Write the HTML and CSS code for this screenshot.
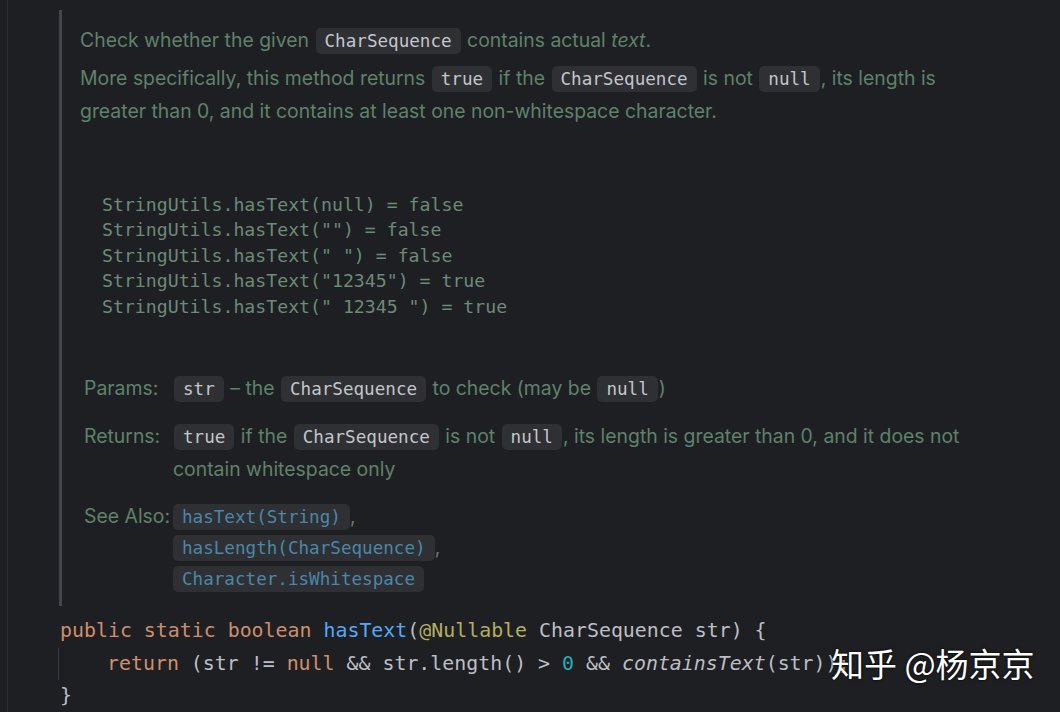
FILE: index.html
```html
<!DOCTYPE html>
<html lang="en">
<head>
<meta charset="utf-8">
<title>hasText</title>
<link rel="stylesheet" href="styles.css">
</head>
<body>
<div class="editor">
  <div class="doc">
    <p class="p1">Check whether the given <code class="chip">CharSequence</code> contains actual <i>text</i>.</p>
    <p class="p2">More specifically, this method returns <code class="chip">true</code> if the <code class="chip">CharSequence</code> is not <code class="chip">null</code>, its length is<br>greater than 0, and it contains at least one non-whitespace character.</p>
    <pre class="example">StringUtils.hasText(null) = false
StringUtils.hasText("") = false
StringUtils.hasText(" ") = false
StringUtils.hasText("12345") = true
StringUtils.hasText(" 12345 ") = true</pre>
    <div class="tags">
      <div class="label">Params:</div>
      <div class="value"><code class="chip">str</code> – the <code class="chip">CharSequence</code> to check (may be <code class="chip">null</code>)</div>
      <div class="label">Returns:</div>
      <div class="value"><code class="chip">true</code> if the <code class="chip">CharSequence</code> is not <code class="chip">null</code>, its length is greater than 0, and it does not<br>contain whitespace only</div>
      <div class="label see">See Also:</div>
      <div class="value see"><code class="chip link">hasText(String)</code>,<br><code class="chip link">hasLength(CharSequence)</code>,<br><code class="chip link">Character.isWhitespace</code></div>
    </div>
  </div>
  <div class="code">
    <div class="line"><span class="kw">public static boolean</span> <span class="fn">hasText</span>(<span class="ann">@Nullable</span> CharSequence str) {</div>
    <div class="line indented"><span class="kw">return</span> (str != <span class="kw">null</span> &amp;&amp; str.length() &gt; <span class="num">0</span> &amp;&amp; <i>containsText</i>(str));</div>
    <div class="line">}</div>
  </div>
</div>
<div class="watermark">知乎 @杨京京</div>
</body>
</html>
```

FILE: styles.css
```css
html, body {
  margin: 0;
  padding: 0;
}
body {
  background: #1e1f22;
  width: 1060px;
  height: 712px;
  overflow: hidden;
  position: relative;
}
.editor {
  margin-left: 7px;
  border-left: 1px solid #2b2d30;
  height: 712px;
  box-sizing: border-box;
  padding-top: 10px;
}
.doc {
  margin-left: 51px;
  border-left: 3px solid #43454a;
  padding: 13.5px 0 12.5px 18px;
  font-family: Inter, "Noto Sans", sans-serif;
  font-size: 19.4px;
  color: #5f826b;
}
.doc p {
  margin: 0;
  line-height: 33px;
}
.doc .p2 {
  margin-top: 5px;
}
.chip {
  font-family: "DejaVu Sans Mono", monospace;
  font-size: 17.6px;
  line-height: 18px;
  color: #c4c6cb;
  background: #2e3034;
  border-radius: 5px;
  padding: 3px 9px;
  margin: 0 1px;
}
.chip.link {
  color: #4b87a8;
  margin: 0;
}
.example {
  margin: 64px 0 0 22px;
  font-family: "DejaVu Sans Mono", monospace;
  font-size: 18.2px;
  line-height: 25.5px;
  color: #6d8a78;
}
.tags {
  margin-top: 52.5px;
  display: grid;
  grid-template-columns: 93px 1fr;
  row-gap: 15px;
  line-height: 33px;
}
.label {
  padding-left: 4px;
}
.see {
  line-height: 31px;
}
.code {
  margin-left: 52px;
  margin-top: 9px;
  font-family: "DejaVu Sans Mono", monospace;
  font-size: 19.9px;
  color: #bcbec4;
}
.line {
  line-height: 32.5px;
  white-space: pre;
}
.indented {
  margin-left: -2px;
  border-left: 1px solid #393b40;
  padding-left: 48px;
}
.kw { color: #cf8e6d; }
.fn { color: #56a8f5; }
.ann { color: #b3ae60; }
.num { color: #2aacb8; }
.code i { font-style: italic; }
.watermark {
  position: absolute;
  left: 831px;
  top: 641px;
  font-family: "Noto Sans CJK SC", sans-serif;
  font-size: 33px;
  line-height: 44px;
  color: #ffffff;
  text-shadow: 0 0 3px rgba(0,0,0,0.8), 0 0 1px rgba(0,0,0,0.9);
}
```
